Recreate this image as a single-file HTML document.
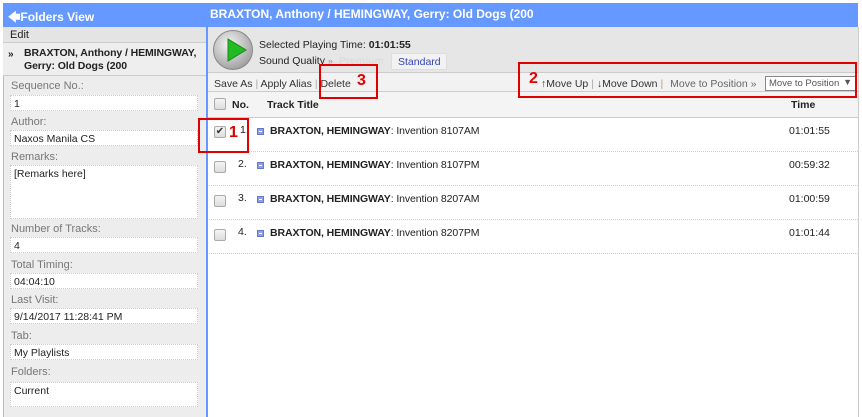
<!DOCTYPE html>
<html><head><meta charset="utf-8"><style>
*{margin:0;padding:0;box-sizing:border-box}
body{width:862px;height:417px;background:#fff;font-family:"Liberation Sans",Arial,sans-serif;font-size:11px;color:#222;position:relative;overflow:hidden}
.a{position:absolute}
.hdr{left:3px;top:3px;width:855px;height:24px;background:#6699ff;color:#fff;font-weight:bold;font-size:12px}
.lbl{position:absolute;left:11px;color:#777;font-size:11px}
.inp{position:absolute;left:10px;width:188px;height:16px;background:#fff;border:1px dotted #ccc;padding:2px 3px;font-size:10.5px;color:#222}
.cb{position:absolute;left:214px;width:12px;height:12px;border:1px solid #aaa;border-radius:2px;background:linear-gradient(#f4f4f4,#ddd)}
.row{position:absolute;left:209px;width:649px;height:34px;border-bottom:1px dotted #ccc}
.num{position:absolute;left:238px;font-size:10.5px}
.plus{position:absolute;left:257px;width:7px;height:7px;background:#8fa0e0;border:1px solid #6678c8}
.plus:after{content:"";position:absolute;left:1px;top:2px;width:3px;height:1px;background:#fff}
.tt{position:absolute;left:270px;font-size:10.5px;letter-spacing:-0.1px}
.tm{position:absolute;left:789px;font-size:10.5px}
.red{position:absolute;border:2px solid #e00000}
.rn{position:absolute;color:#e00000;font-weight:bold;font-size:16px}
</style></head><body>
<div class="a hdr"></div>
<div class="a" style="left:8px;top:8px;color:#fff;font-weight:bold;font-size:12px">&#129092;Folders View</div>
<div class="a" style="left:210px;top:7px;color:#fff;font-weight:bold;font-size:12px">BRAXTON, Anthony / HEMINGWAY, Gerry: Old Dogs (200</div>
<!-- left panel -->
<div class="a" style="left:3px;top:27px;width:203px;height:390px;background:#ededed;border-left:1px solid #bbb"></div>
<div class="a" style="left:3px;top:27px;width:203px;height:16px;background:#e4e4e4;border-bottom:1px solid #ccc;padding:2px 7px">Edit</div>
<div class="a" style="left:3px;top:43px;width:203px;height:33px;background:#eee;border-bottom:1px solid #ccc"></div>
<div class="a" style="left:8px;top:49px;font-weight:bold;font-size:10px">»</div>
<div class="a" style="left:24px;top:47px;font-weight:bold;font-size:10.5px;line-height:13px;letter-spacing:-0.1px">BRAXTON, Anthony / HEMINGWAY,<br>Gerry: Old Dogs (200</div>
<div class="lbl" style="top:80px">Sequence No.:</div><div class="inp" style="top:95px">1</div>
<div class="lbl" style="top:116px">Author:</div><div class="inp" style="top:130px">Naxos Manila CS</div>
<div class="lbl" style="top:151px">Remarks:</div><div class="inp" style="top:165px;height:54px">[Remarks here]</div>
<div class="lbl" style="top:223px">Number of Tracks:</div><div class="inp" style="top:237px">4</div>
<div class="lbl" style="top:259px">Total Timing:</div><div class="inp" style="top:273px">04:04:10</div>
<div class="lbl" style="top:294px">Last Visit:</div><div class="inp" style="top:308px">9/14/2017 11:28:41 PM</div>
<div class="lbl" style="top:330px">Tab:</div><div class="inp" style="top:344px">My Playlists</div>
<div class="lbl" style="top:366px">Folders:</div><div class="inp" style="top:382px;height:25px">Current</div>
<div class="a" style="left:206px;top:27px;width:2px;height:390px;background:#6699ff"></div>
<!-- right top -->
<div class="a" style="left:208px;top:27px;width:650px;height:46px;background:#e6e6e6;border-bottom:1px solid #ccc"></div>
<div class="a" style="left:213px;top:30px;width:40px;height:40px;border-radius:50%;background:radial-gradient(circle at 40% 35%,#f4f4f4,#a8a8a8 70%,#777);border:1px solid #888"></div>
<svg class="a" style="left:213px;top:30px" width="40" height="40"><polygon points="15,9 15,31 33,20" fill="#22bb22" stroke="#168816" stroke-width="1"/></svg>
<div class="a" style="left:259px;top:39px;font-size:10.5px">Selected Playing Time: <b>01:01:55</b></div>
<div class="a" style="left:259px;top:55px;font-size:10.5px">Sound Quality <span style="color:#999;font-size:9px">»</span> <span style="color:#ddd;font-weight:bold;margin-left:3px">Premium</span></div>
<div class="a" style="left:391px;top:53px;width:56px;height:17px;background:#f2f2f2;border:1px solid #ddd;color:#3344bb;padding:2px 6px;font-size:10.5px">Standard</div>
<div class="a" style="left:208px;top:73px;width:650px;height:19px;background:#f2f2f2;border-bottom:1px solid #ccc"></div>
<div class="a" style="left:214px;top:78px;color:#333;font-size:10.5px">Save As <span style="color:#aaa">|</span> Apply Alias <span style="color:#aaa">|</span> Delete</div>
<div class="a" style="left:541px;top:78px;color:#333;font-size:10.5px">↑Move Up <span style="color:#aaa">|</span> ↓Move Down <span style="color:#c96">|</span> <span style="color:#666;margin-left:4px">Move to Position »</span></div>
<div class="a" style="left:765px;top:76px;width:91px;height:15px;background:#fff;border:1px solid #888;font-size:9.5px;color:#555;padding:1px 3px">Move to Position <span style="position:absolute;right:3px;top:0;font-size:9px">▼</span></div>
<div class="a" style="left:208px;top:92px;width:650px;height:26px;background:#f4f4f4;border-bottom:1px solid #ccc"></div>
<div class="cb" style="top:98px"></div>
<div class="a" style="left:232px;top:99px;font-weight:bold;font-size:10.5px">No.</div>
<div class="a" style="left:267px;top:99px;font-weight:bold;font-size:10.5px">Track Title</div>
<div class="a" style="left:791px;top:99px;font-weight:bold;font-size:10.5px">Time</div>
<div class="row" style="top:118px"></div>
<div class="row" style="top:152px"></div>
<div class="row" style="top:186px"></div>
<div class="row" style="top:220px"></div>
<div class="cb" style="top:126px;color:#333;font-size:10px;line-height:10px;text-align:center">✔</div>
<div class="num" style="top:124px;left:240px">1.</div><div class="plus" style="top:128px"></div>
<div class="tt" style="top:125px"><b>BRAXTON, HEMINGWAY</b>: Invention 8107AM</div><div class="tm" style="top:125px">01:01:55</div>
<div class="cb" style="top:161px"></div>
<div class="num" style="top:158px">2.</div><div class="plus" style="top:162px"></div>
<div class="tt" style="top:159px"><b>BRAXTON, HEMINGWAY</b>: Invention 8107PM</div><div class="tm" style="top:159px">00:59:32</div>
<div class="cb" style="top:195px"></div>
<div class="num" style="top:192px">3.</div><div class="plus" style="top:196px"></div>
<div class="tt" style="top:193px"><b>BRAXTON, HEMINGWAY</b>: Invention 8207AM</div><div class="tm" style="top:193px">01:00:59</div>
<div class="cb" style="top:229px"></div>
<div class="num" style="top:226px">4.</div><div class="plus" style="top:230px"></div>
<div class="tt" style="top:227px"><b>BRAXTON, HEMINGWAY</b>: Invention 8207PM</div><div class="tm" style="top:227px">01:01:44</div>
<div class="a" style="left:858px;top:27px;width:1px;height:390px;background:#ccc"></div>
<!-- annotations -->
<div class="red" style="left:198px;top:118px;width:51px;height:35px"></div>
<div class="rn" style="left:229px;top:124px">1</div>
<div class="red" style="left:319px;top:64px;width:59px;height:35px"></div>
<div class="rn" style="left:357px;top:72px">3</div>
<div class="red" style="left:518px;top:62px;width:339px;height:36px"></div>
<div class="rn" style="left:529px;top:70px">2</div>
</body></html>
